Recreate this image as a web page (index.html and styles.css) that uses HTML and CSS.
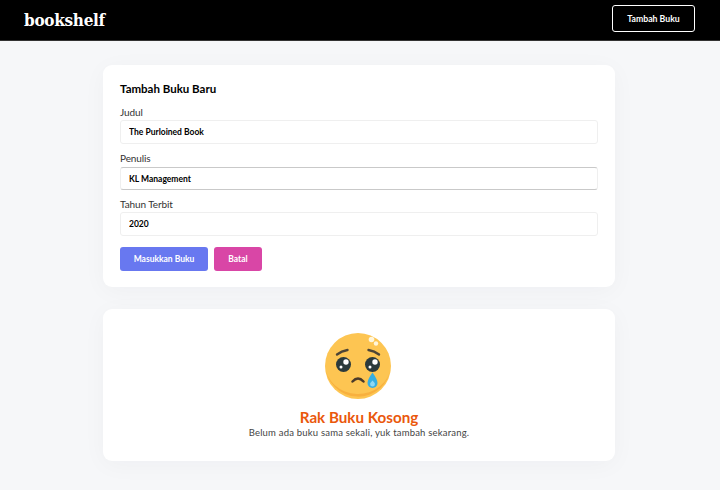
FILE: index.html
```html
<!DOCTYPE html>
<html lang="id">
<head>
<meta charset="utf-8">
<title>Bookshelf</title>
<link rel="stylesheet" href="styles.css">
</head>
<body>
<header class="topbar">
  <h1 class="brand">bookshelf</h1>
  <button class="btn-outline">Tambah Buku</button>
</header>
<main class="content">
  <section class="card form-card">
    <h2 class="form-title">Tambah Buku Baru</h2>
    <label class="field"><span class="field-label">Judul</span>
      <input class="field-input" value="The Purloined Book"></label>
    <label class="field"><span class="field-label">Penulis</span>
      <input class="field-input field-input-focus" value="KL Management"></label>
    <label class="field"><span class="field-label">Tahun Terbit</span>
      <input class="field-input" value="2020"></label>
    <div class="actions">
      <button class="btn btn-primary">Masukkan Buku</button>
      <button class="btn btn-danger">Batal</button>
    </div>
  </section>
  <section class="card empty-card">
    <svg class="emoji" viewBox="0 0 68 68" width="68" height="68" aria-hidden="true">
      <circle cx="34" cy="34" r="33" fill="#fdc552"/>
      <path d="M1.100 33a33 33 0 0 0 65.800 2 33 30 0 0 1-65.800-2z" fill="#f8b03e"/>
      <circle cx="47.500" cy="7.500" r="2.800" fill="#fff6dc"/>
      <circle cx="52" cy="11.500" r="2.200" fill="#fff6dc"/>
      <path d="M13 22.500q4.500-3.500 10.500-4.500" fill="none" stroke="#4d4536" stroke-width="2.400" stroke-linecap="round"/>
      <path d="M55 22.500q-4.500-3.500-10.500-4.500" fill="none" stroke="#4d4536" stroke-width="2.400" stroke-linecap="round"/>
      <circle cx="19.500" cy="32.500" r="7.500" fill="#2b3a3c"/>
      <circle cx="48.500" cy="32.500" r="7.500" fill="#2b3a3c"/>
      <circle cx="22" cy="30" r="2.700" fill="#fff"/>
      <circle cx="17" cy="35" r="1.500" fill="#fff"/>
      <circle cx="51" cy="30" r="2.700" fill="#fff"/>
      <circle cx="46" cy="35" r="1.500" fill="#fff"/>
      <path d="M28.500 49.500q5.500-6 11 0" fill="none" stroke="#4a3a2a" stroke-width="2.500" stroke-linecap="round"/>
      <path d="M48.500 40.500q-5 7-5 10.500a5 5 0 0 0 10 0q0-3.500-5-10.500z" fill="#36aee0"/>
      <path d="M48.500 48.500q-2.400 2.300-2.400 3.700a2.400 2.400 0 0 0 4.800 0q0-1.400-2.400-3.700z" fill="#8fd8f2"/>
    </svg>
    <h3 class="empty-title">Rak Buku Kosong</h3>
    <p class="empty-text">Belum ada buku sama sekali, yuk tambah sekarang.</p>
  </section>
</main>
</body>
</html>
```
FILE: styles.css
```css
* { box-sizing: border-box; }
html, body { margin: 0; height: 490px; overflow: hidden; }
body { background: #f6f7f9; font-family: "Lato", "Noto Sans", sans-serif; color: #000; }
.topbar { height: 41px; background: #000; border-bottom: 1px solid #333; display: flex; align-items: center; justify-content: space-between; padding: 0 25px 0 24px; }
.brand { margin: 0; color: #fff; font: bold 17px "DejaVu Serif", serif; font-stretch: condensed; letter-spacing: -.3px; }
.btn-outline { width: 83px; height: 27px; padding: 0; background: #000; color: #fff; border: 1.500px solid #fff; border-radius: 3px; font: bold 8.700px "Lato", sans-serif; margin-top: -4px; }
.content { width: 512px; margin: 24px 0 0 103px; display: flex; flex-direction: column; gap: 22px; }
.card { background: #fff; border-radius: 9px; box-shadow: 0 4px 24px rgba(30, 30, 60, .035); }
.form-card { height: 222px; padding: 17px; }
.form-title { margin: 0 0 10px; font: bold 11.500px/13px "Lato", sans-serif; }
.field { display: block; margin-bottom: 7px; }
.field-label { display: block; font: 10px/14px "Lato", sans-serif; color: #333; letter-spacing: -.1px; }
.field-input { display: block; width: 100%; height: 24px; margin-top: 1px; padding: 0 8px; border: 1px solid #efefef; border-radius: 3px; background: #fff; font: bold 8.500px "Lato", sans-serif; color: #000; outline: none; }
.field-input-focus { height: 23px; margin-top: 2px; border-top-color: #c9c9c9; border-bottom-color: #c9c9c9; }
.actions { display: flex; gap: 6px; margin-top: 11px; }
.btn { height: 24px; padding: 0; border: 0; border-radius: 3px; color: #fff; font: bold 8.500px "Lato", sans-serif; }
.btn-primary { width: 88px; background: #6878f0; }
.btn-danger { width: 48px; background: #d946a6; }
.empty-card { height: 152px; padding-top: 23px; display: flex; flex-direction: column; align-items: center; }
.emoji { display: block; margin-left: -2px; }
.empty-title { margin: 8px 0 0; font: bold 15.200px/18px "Lato", sans-serif; color: #ea580c; }
.empty-text { margin: 0; font: 9.500px/13px "Lato", sans-serif; color: #444; letter-spacing: .2px; }
```
